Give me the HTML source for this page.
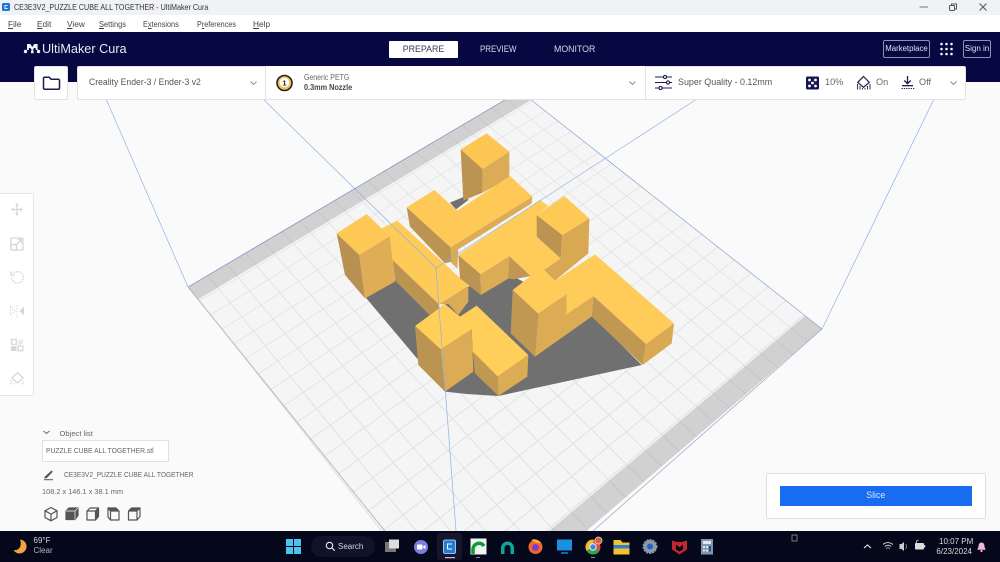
<!DOCTYPE html>
<html><head><meta charset="utf-8"><title>UltiMaker Cura</title>
<style>
html,body{margin:0;padding:0;background:#fafafb;width:1000px;height:562px;overflow:hidden}
#r{position:relative;width:1000px;height:562px;overflow:hidden;background:#fafafb;font-family:"Liberation Sans",sans-serif;color:#555}
.t{position:absolute;white-space:nowrap;line-height:1;transform-origin:0 0}
.b{position:absolute;box-sizing:border-box}
#plate{position:absolute;left:0;top:0;width:0;height:0;transform-origin:0 0;
transform:matrix3d(1.93095,-0.81709,0,0.00081132, 0.78382,0.94114,0,-0.0010145, 0,0,1,0, 188,287,0,1)}
#plate p{position:absolute;margin:0;background-color:#f5f5f5;
background-image:linear-gradient(#e3e3e3 0,#e3e3e3 .45px,transparent .45px),linear-gradient(90deg,#e3e3e3 0,#e3e3e3 .45px,transparent .45px);
background-size:11px 11px}
#plate i{position:absolute;height:10px;background:rgba(150,150,150,.38)}
svg{position:absolute;left:0;top:0}
</style></head><body><div id="r">

<div id="plate">
<p style="left:0;top:0;width:11.5px;height:181px;background-position:0 0"></p>
<p style="left:11px;top:0;width:11.5px;height:190px;background-position:-11px 0"></p>
<p style="left:22px;top:0;width:9.5px;height:198px;background-position:-22px 0"></p>
<p style="left:31px;top:0;width:15.5px;height:206.8px;background-position:-31px 0"></p>
<p style="left:46px;top:0;width:174px;height:220px;background-position:-46px 0"></p>
<i style="left:0;top:0;width:220px"></i>
<i style="left:46px;top:210px;width:174px"></i>
</div>

<svg width="1000" height="562" viewBox="0 0 1000 562">
<g transform="translate(320 120) scale(.33333)">
<polygon fill="#707070" points="135,530 225,480 330,585 445,500 580,470 640,500 820,590 965,735 535,828 440,822 375,815"/>
<polygon fill="#707070" points="390,248 438,228 445,240 408,268"/>
<!-- A -->
<polygon fill="#fdc653" points="422,88 500,40 568,95 488,147"/>
<polygon fill="#bb9452" points="422,88 488,147 488,218 430,242"/>
<polygon fill="#dbab55" points="488,147 568,95 568,175 488,218"/>
<!-- B -->
<polygon fill="#ffc957" points="260,262 343,210 412,272 570,168 637,230 392,382"/>
<polygon fill="#bb9452" points="260,262 392,382 395,425 375,430 270,320"/>
<polygon fill="#dbab55" points="392,382 637,230 635,250 415,388 412,445 395,430"/>
<!-- C -->
<polygon fill="#fec855" points="50,340 140,282 185,325 210,348 118,405"/>
<polygon fill="#b89152" points="50,340 118,405 135,535 75,465"/>
<polygon fill="#dfad55" points="118,405 210,348 225,485 135,535"/>
<!-- D -->
<polygon fill="#ffcb58" points="185,325 232,302 445,497 357,553 218,420 210,348"/>
<polygon fill="#bb9452" points="218,420 357,553 358,568 330,585 225,480"/>
<polygon fill="#dbab55" points="357,553 445,497 445,545 415,585 385,552"/>
<!-- E1 -->
<polygon fill="#bb9452" points="415,405 482,462 482,525 420,475"/>
<polygon fill="#dcac55" points="482,462 568,408 566,475 525,500 482,525"/>
<polygon fill="#c09852" points="568,408 632,468 580,478 565,475"/>
<polygon fill="#ffcc59" points="415,405 660,240 685,258 650,285 650,350 722,415 672,450 705,482 825,403 1062,610 978,672 820,528 738,585 740,522 655,582 578,510 632,468 568,408 482,462"/>
<!-- F -->
<polygon fill="#bc9452" points="650,285 727,345 722,415 650,350"/>
<polygon fill="#d8a853" points="727,345 808,295 805,400 705,482 672,450 722,415"/>
<polygon fill="#ffc956" points="650,285 733,228 808,295 727,345"/>
<!-- E2 -->
<polygon fill="#c09852" points="578,510 655,582 645,710 572,640"/>
<polygon fill="#dcac55" points="655,582 740,522 738,585 820,528 815,590 645,710"/>
<polygon fill="#c09852" points="820,528 978,672 968,735 815,590"/>
<polygon fill="#d9a953" points="978,672 1062,610 1055,670 968,735"/>
<!-- G -->
<polygon fill="#ffcf5a" points="285,618 375,552 420,590 470,557 625,705 533,770 458,695 455,628 362,688"/>
<polygon fill="#bb9452" points="285,618 362,688 375,815 295,735"/>
<polygon fill="#dbab55" points="362,688 455,628 460,755 375,815"/>
<polygon fill="#c09852" points="458,695 533,770 535,828 465,760"/>
<polygon fill="#dcac55" points="533,770 625,705 622,770 535,828"/>
</g>
<!-- volume lines -->
<g fill="none" stroke-width=".7">
<path stroke="#8fb0e6" d="M106 99L188 287M263 99L436 268M697 99L436 268L456 531M934 99L822 329"/>
<path stroke="#8ba3d8" d="M530 99L822 329"/>
<path stroke="#7f94c8" d="M188 287L520 91"/>
<path stroke="#8fa4c8" d="M593 531L822 329"/>
<path stroke="#b4bccb" stroke-width="1" d="M188 287L385 531"/>
</g>
</svg>

<!-- title bar -->
<div class="b" style="left:0;top:0;width:1000px;height:15px;background:#f0f2f6"></div>
<div class="b" style="left:0;top:15px;width:1000px;height:17px;background:#fff"></div>
<div class="b" style="left:0;top:31.5px;width:1000px;height:50px;background:#070741"></div>
<div class="t" style="left:14px;top:3px;font-size:8.6px;color:#333;transform:scaleX(.833)">CE3E3V2_PUZZLE CUBE ALL TOGETHER - UltiMaker Cura</div>
<div class="t" style="left:8px;top:20px;font-size:8.3px;color:#444"><u>F</u>ile</div>
<div class="t" style="left:37px;top:20px;font-size:8.3px;color:#444"><u>E</u>dit</div>
<div class="t" style="left:67px;top:20px;font-size:8.3px;color:#444"><u>V</u>iew</div>
<div class="t" style="left:99px;top:20px;font-size:8.3px;color:#444;transform:scaleX(.9)"><u>S</u>ettings</div>
<div class="t" style="left:143px;top:20px;font-size:8.3px;color:#444;transform:scaleX(.88)">E<u>x</u>tensions</div>
<div class="t" style="left:197px;top:20px;font-size:8.3px;color:#444;transform:scaleX(.87)">P<u>r</u>eferences</div>
<div class="t" style="left:253px;top:20px;font-size:8.3px;color:#444"><u>H</u>elp</div>

<!-- header -->
<div class="t" style="left:42px;top:42.500px;font-size:12.7px;color:#e8e8f2">UltiMaker Cura</div>
<div class="b" style="left:389px;top:40.5px;width:69px;height:17px;background:#fff;border-radius:1px"></div>
<div class="t" style="left:389px;width:69px;text-align:center;top:44.5px;font-size:8.8px;color:#3a3a5a">PREPARE</div>
<div class="t" style="left:479.5px;top:44.5px;font-size:8.8px;color:#d8d8e8;transform:scaleX(.9)">PREVIEW</div>
<div class="t" style="left:554px;top:44.5px;font-size:8.8px;color:#d8d8e8">MONITOR</div>
<div class="b" style="left:883px;top:40px;width:47px;height:18px;border:1px solid #8f8fb5;border-radius:2px"></div>
<div class="t" style="left:883px;width:47px;text-align:center;top:45px;font-size:7.8px;color:#e0e0ee">Marketplace</div>
<div class="b" style="left:963px;top:40px;width:28px;height:18px;border:1px solid #8f8fb5;border-radius:2px"></div>
<div class="t" style="left:963px;width:28px;text-align:center;top:45px;font-size:8px;color:#e0e0ee">Sign in</div>

<!-- top bars -->
<div class="b" style="left:34px;top:66px;width:34px;height:33.5px;background:#fff;border:1px solid #e2e2e2;border-radius:2px"></div>
<div class="b" style="left:76.5px;top:66px;width:189.5px;height:33.5px;background:#fff;border:1px solid #e2e2e2;border-radius:2px 0 0 2px"></div>
<div class="b" style="left:266px;top:66px;width:379px;height:33.5px;background:#fff;border-bottom:1px solid #e2e2e2"></div>
<div class="b" style="left:644.5px;top:66px;width:321.5px;height:33.5px;background:#fff;border:1px solid #e2e2e2;border-radius:0 2px 2px 0"></div>
<div class="t" style="left:88.5px;top:77.5px;font-size:9.6px;color:#555;transform:scaleX(.9)">Creality Ender-3 / Ender-3 v2</div>
<div class="t" style="left:304px;top:74px;font-size:8px;color:#666;transform:scaleX(.87)">Generic PETG</div>
<div class="t" style="left:304px;top:84px;font-size:8px;font-weight:bold;color:#444;transform:scaleX(.91)">0.3mm Nozzle</div>
<div class="t" style="left:677.5px;top:77.5px;font-size:9.6px;color:#555;transform:scaleX(.93)">Super Quality - 0.12mm</div>
<div class="t" style="left:825px;top:77.5px;font-size:9.6px;color:#666;transform:scaleX(.95)">10%</div>
<div class="t" style="left:876px;top:77.5px;font-size:9.6px;color:#666;transform:scaleX(.95)">On</div>
<div class="t" style="left:919px;top:77.5px;font-size:9.6px;color:#666;transform:scaleX(.95)">Off</div>

<!-- left toolbar -->
<div class="b" style="left:0;top:193px;width:33.5px;height:202.5px;background:#fff;border:1px solid #e6e6e6;border-left:0;border-radius:0 2px 2px 0"></div>

<!-- object list -->
<div class="t" style="left:59.5px;top:429.5px;font-size:7.6px;color:#666">Object list</div>
<div class="b" style="left:42px;top:440px;width:127px;height:21.5px;background:#fff;border:1px solid #e0e0e0"></div>
<div class="t" style="left:46px;top:447px;font-size:7.6px;color:#666;transform:scaleX(.89)">PUZZLE CUBE ALL TOGETHER.stl</div>
<div class="t" style="left:64px;top:470.5px;font-size:7.6px;color:#666;transform:scaleX(.87)">CE3E3V2_PUZZLE CUBE ALL TOGETHER</div>
<div class="t" style="left:42px;top:488px;font-size:7.6px;color:#666;transform:scaleX(.97)">108.2 x 146.1 x 38.1 mm</div>

<!-- slice -->
<div class="b" style="left:766px;top:473px;width:219.5px;height:45.5px;background:#fff;border:1px solid #e0e0e0;border-radius:2px"></div>
<div class="b" style="left:780px;top:485.5px;width:191.5px;height:20.5px;background:#196cef"></div>
<div class="t" style="left:780px;width:191.5px;text-align:center;top:491px;font-size:8.8px;color:#d8e6ff">Slice</div>

<!-- taskbar -->
<div class="b" style="left:0;top:530.5px;width:1000px;height:31.5px;background:#05071a"></div>
<div class="b" style="left:311px;top:536px;width:64px;height:21px;border-radius:11px;background:#11132a"></div>
<div class="b" style="left:437px;top:533px;width:25px;height:27px;border-radius:3px;background:#14172c"></div>
<div class="t" style="left:33.5px;top:537px;font-size:8px;color:#d6d6d6">69°F</div>
<div class="t" style="left:33.5px;top:547px;font-size:8px;color:#b8b8b8">Clear</div>
<div class="t" style="left:338px;top:543px;font-size:8px;color:#d8d8d8">Search</div>
<div class="t" style="left:939px;top:537.5px;width:33px;text-align:right;font-size:8px;color:#d8d8d8">10:07 PM</div>
<div class="t" style="left:929px;top:547.5px;width:43px;text-align:right;font-size:8px;color:#d8d8d8">6/23/2024</div>

<svg width="1000" height="562" viewBox="0 0 1000 562">
<!-- title icon + window buttons -->
<rect x="2" y="3" width="8" height="8" rx="1.5" fill="#1f78d8"/><path d="M7.6 5.6H5v3h2.6" stroke="#fff" fill="none" stroke-width=".9"/>
<path d="M919.500 7H928" stroke="#777" stroke-width="1"/>
<g fill="none" stroke="#555" stroke-width="1"><rect x="949.500" y="5.500" width="5" height="5" rx="1"/><path d="M951.500 5.500V4h5v5h-2"/></g>
<path d="M979.500 3.500l7 7M986.500 3.500l-7 7" stroke="#555" stroke-width="1"/>
<!-- logo -->
<g fill="#f0f0f6"><circle cx="25.500" cy="51.500" r="1.700"/><circle cx="38.500" cy="51.500" r="1.700"/><path d="M27 44h3.400l1.900 3 1.900-3h3.400v6h-1.900v-2h-1.500l-1.900 3-1.900-3h-1.500v2H27zM31 50.500h2.600v2.700H31z"/></g>
<!-- apps grid -->
<g fill="#f4f4fa"><circle cx="941.500" cy="44" r="1.300"/><circle cx="946.500" cy="44" r="1.300"/><circle cx="951.500" cy="44" r="1.300"/><circle cx="941.500" cy="49" r="1.300"/><circle cx="946.500" cy="49" r="1.300"/><circle cx="951.500" cy="49" r="1.300"/><circle cx="941.500" cy="54" r="1.300"/><circle cx="946.500" cy="54" r="1.300"/><circle cx="951.500" cy="54" r="1.300"/></g>
<!-- folder -->
<path d="M43.500 78.500a1.200 1.200 0 0 1 1.200-1.200h4.500l1.800 2h7.300a1.200 1.200 0 0 1 1.200 1.200v7.500a1.200 1.200 0 0 1-1.200 1.200H44.700a1.200 1.200 0 0 1-1.200-1.200z" fill="none" stroke="#1c1c50" stroke-width="1.500"/>
<!-- chevrons -->
<g fill="none" stroke="#888" stroke-width=".9"><path d="M250.500 81.500l3 3 3-3M629.500 81.500l3 3 3-3M950.500 81.500l3 3 3-3"/><path stroke="#666" d="M43.500 431l3 2.500 3-2.500"/></g>
<!-- nozzle -->
<circle cx="284.500" cy="83" r="7.500" fill="#f6c44e" stroke="#222" stroke-width="1.600"/><circle cx="284.500" cy="82.500" r="4.800" fill="#fff"/>
<text x="284.500" y="85.500" font-family="Liberation Sans,sans-serif" font-size="7.500" font-weight="bold" text-anchor="middle" fill="#222">1</text>
<!-- settings sliders -->
<g stroke="#1c1c50" stroke-width="1.100" fill="#fff"><path d="M655 77h17M655 82.500h17M655 88h17"/><circle cx="665" cy="77" r="1.600"/><circle cx="668" cy="82.500" r="1.600"/><circle cx="660.500" cy="88" r="1.600"/></g>
<!-- infill -->
<rect x="806" y="76.500" width="13" height="13" rx="1.500" fill="#171750"/>
<g fill="#fff"><circle cx="809.500" cy="80" r="1.400"/><circle cx="815.500" cy="80" r="1.400"/><circle cx="812.500" cy="83" r="1.400"/><circle cx="809.500" cy="86" r="1.400"/><circle cx="815.500" cy="86" r="1.400"/></g>
<!-- support -->
<path d="M863.500 76.500l5.800 5.800-5.800 5-5.800-5z" fill="none" stroke="#1c1c50" stroke-width="1.200"/>
<path d="M857.500 84v5.500M860 86v3.500M862.500 88v1.500M865 88v1.500M867.500 86v3.500M870 84v5.500" stroke="#1c1c50" stroke-width=".9"/>
<!-- adhesion -->
<path d="M907.500 76v7M904.300 80.500l3.200 3.200 3.200-3.200" fill="none" stroke="#1c1c50" stroke-width="1.300"/>
<path d="M902 85h11v1.300h-11z" fill="#1c1c50"/><path d="M901.500 88.500h13" stroke="#1c1c50" stroke-width="1" stroke-dasharray="1.300 1"/>
<!-- left tools -->
<g fill="none" stroke="#d6d7da" stroke-width="1.300">
<path d="M17 204v11M11.500 209.500h11" /><path fill="#d6d7da" stroke="none" d="M17 203l2.200 2.500h-4.400zM17 216l2.200-2.500h-4.400zM11 209.500l2.500-2.200v4.400zM23 209.500l-2.500-2.200v4.400z"/>
<rect x="11" y="238" width="12" height="12" rx="1"/><rect x="11" y="244.500" width="5.500" height="5.500" rx=".8"/><path d="M15.500 245.500l5.500-5.500M17.500 239.500h3.800v3.800"/>
<path d="M11.800 277.500a5.800 5.800 0 1 0 1.800-4.300" stroke-dasharray="2 1"/><path d="M11 271.500v3.500h3.500"/>
<path fill="#d6d7da" stroke="none" d="M24 306.500v9l-4.500-4.500z"/><path d="M10.500 306.500v9l4.500-4.500zM17 305v13" stroke-width="1" stroke-dasharray="1.500 1.500"/>
<rect x="11.500" y="339.500" width="4.800" height="4.800"/><rect x="18" y="346" width="4.800" height="4.800"/><rect x="11" y="346" width="5.500" height="5" fill="#d6d7da" stroke="none"/><path d="M18 344.500l5-5M20 344.500l3-3M18 342l2.500-2.500" stroke-width=".8"/>
<path d="M17.500 372.500l5.500 5.500-5.500 5-5.500-5z"/><path d="M11 380v4.500M14 383v1.500M21 383v1.500M23 381v3.500" stroke-width=".9"/>
</g>
<!-- pencil -->
<path d="M44.500 477l7-6.500 1.300 1.300-6.200 6.500h-2.300z" fill="#555"/><path d="M44 479.700h9" stroke="#555" stroke-width="1"/>
<!-- view cubes -->
<g fill="none" stroke="#555" stroke-width="1.200" stroke-linejoin="round">
<path d="M51 507.500l6 3.300v6.700l-6 3.300-6-3.300v-6.700zM45 510.800l6 3.300 6-3.300M51 514.100v6.700"/>
<path fill="#555" d="M66 511l3-3h9v7.500l-3 4H66z"/><path stroke="#f6f6f6" stroke-width=".7" d="M66 511h9l3-3M75 511v8.500"/>
<path d="M87 511h8.500v9H87zM87 511l3-3h8.500v8.500l-3 3.500M95.500 511l3-3"/><path fill="#555" stroke="none" d="M95.500 511l3-3v8.500l-3 3.500z"/>
<path d="M108 508h8l3 3v9h-8.500l-2.500-3zM108 508l2.500 3h8.500M110.500 511v9"/><path fill="#555" stroke="none" d="M108 508h8l3 3h-8.500z"/>
<path d="M128.500 511h8.500v9h-8.500zM128.500 511l3-3h8.500l-3 3M140 508v8.500l-3 3.500"/><path fill="#555" stroke="none" d="M131.500 508h8.500l-3 3h-8.500z"/>
</g>
<!-- taskbar icons -->
<path d="M20 539.500a7 7 0 1 1-6.500 10.500c5 1 9-3.500 6.500-10.500z" fill="#f0a63c"/>
<g fill="#4cc2ee"><rect x="286" y="539" width="7" height="7"/><rect x="294" y="539" width="7" height="7"/><rect x="286" y="547" width="7" height="7"/><rect x="294" y="547" width="7" height="7"/></g>
<circle cx="329.500" cy="545.500" r="3.200" fill="none" stroke="#eee" stroke-width="1.100"/><path d="M332 548l2.700 2.700" stroke="#eee" stroke-width="1.200"/>
<rect x="385" y="542" width="11" height="10" fill="#777"/><rect x="389" y="539.500" width="10" height="9" fill="#ddd"/>
<circle cx="421" cy="547" r="7" fill="#7a7fe0"/><rect x="417" y="544.500" width="5.500" height="5" rx="1" fill="#fff"/><path d="M423 546.500l2.500-1.500v4l-2.500-1.500z" fill="#fff"/>
<rect x="443.500" y="540" width="12" height="13.500" rx="1.500" fill="#1f7ad8" stroke="#cfe3f8" stroke-width=".8"/><path d="M452 544h-4.500v5h4.500" stroke="#fff" fill="none" stroke-width="1"/>
<rect x="445" y="557" width="10" height="1.200" fill="#e0b4dc"/>
<rect x="470.500" y="538.500" width="16" height="16" fill="#f2f2f2"/><path d="M473 554v-5a6 6 0 0 1 11-3" stroke="#0c9a3a" stroke-width="3.500" fill="none"/>
<rect x="476" y="557" width="4" height="1" fill="#889"/>
<path d="M501 554v-6a6.500 6.500 0 0 1 13 0v6h-3.500v-6a3 3 0 0 0-6 0v6z" fill="#0ea5a0"/>
<circle cx="535.500" cy="547" r="7" fill="#f2662d"/><circle cx="535.500" cy="547.500" r="3.500" fill="#7a3fd0"/><path d="M531 540c4-2 8 0 10 3l-4 0z" fill="#f9b233"/>
<path d="M557 539.500h15v11h-15z" fill="#1b8fe0"/><path d="M561 552h7v2h-7z" fill="#1267b0"/>
<circle cx="593" cy="547" r="7.500" fill="#e9453a"/><path d="M593 547l6.500 3.700a7.500 7.500 0 0 1-13 .0z" fill="#2aa84a"/><path d="M593 547l-6.500 3.700a7.500 7.500 0 0 1 7-11.200z" fill="#e9c83a" opacity=".9"/><circle cx="593" cy="547" r="3.200" fill="#3b82e8" stroke="#eee" stroke-width="1"/>
<circle cx="598.500" cy="540.500" r="3.500" fill="#d8622e" stroke="#ddd" stroke-width=".8"/>
<rect x="591" y="557" width="4" height="1" fill="#889"/>
<path d="M613.500 540h7l2 2.500h7v12h-16z" fill="#f4c430"/><rect x="613.500" y="545" width="16" height="3.500" fill="#2a7fd0"/>
<circle cx="650" cy="546.500" r="6.500" fill="#8e98a8" stroke="#8e98a8" stroke-width="2" stroke-dasharray="2 1"/><circle cx="650" cy="546.500" r="3" fill="#1f66c0"/>
<path d="M672 540.500l5 1.500h5l5-1.500v9l-7.500 5-7.500-5z" fill="#c0282c"/><path d="M676 544.500v5l3.500 2 3.500-2v-5l-3.500 3z" fill="#05071a"/>
<rect x="701" y="539" width="12" height="15.500" fill="#7f97ae"/><rect x="703" y="541" width="8" height="3" fill="#e4eaf0"/><g fill="#dce4ec"><rect x="703" y="546" width="2" height="2"/><rect x="706" y="546" width="2" height="2"/><rect x="703" y="549.500" width="2" height="2"/><rect x="706" y="549.500" width="2" height="2"/></g><rect x="709" y="546" width="2" height="5.500" fill="#1d4f88"/>
<rect x="792" y="535" width="5" height="6" fill="none" stroke="#aaa" stroke-width=".7"/>
<path d="M864 548l3.500-3 3.500 3" fill="none" stroke="#eee" stroke-width="1.100"/>
<g fill="none" stroke="#ddd" stroke-width=".9"><path d="M883 544.500a7.500 7.500 0 0 1 10 0M884.700 546.500a5 5 0 0 1 6.600 0M886.300 548.500a2.500 2.500 0 0 1 3.400 0"/></g>
<path d="M899.500 544h2l2.500-2v9l-2.500-2h-2z" fill="#ccc"/><path d="M905.500 544a3.500 3.500 0 0 1 0 5" stroke="#999" fill="none" stroke-width=".8"/>
<rect x="915" y="543" width="9" height="6.500" rx="1" fill="#ddd"/><path d="M924 545h1.200v2.500H924" fill="#ddd"/><path d="M916 543l1-2.500h1.500" stroke="#ddd" fill="none" stroke-width=".8"/>
<path d="M981.500 542.500a2.900 2.900 0 0 1 2.900 2.900c0 2.500 1.300 3.600 1.300 4.400h-8.400c0-.8 1.300-1.900 1.300-4.400a2.900 2.900 0 0 1 2.900-2.900z" fill="#f0b8d8"/><circle cx="981.500" cy="551" r="1.100" fill="#f0b8d8"/>
</svg>
</div></body></html>
